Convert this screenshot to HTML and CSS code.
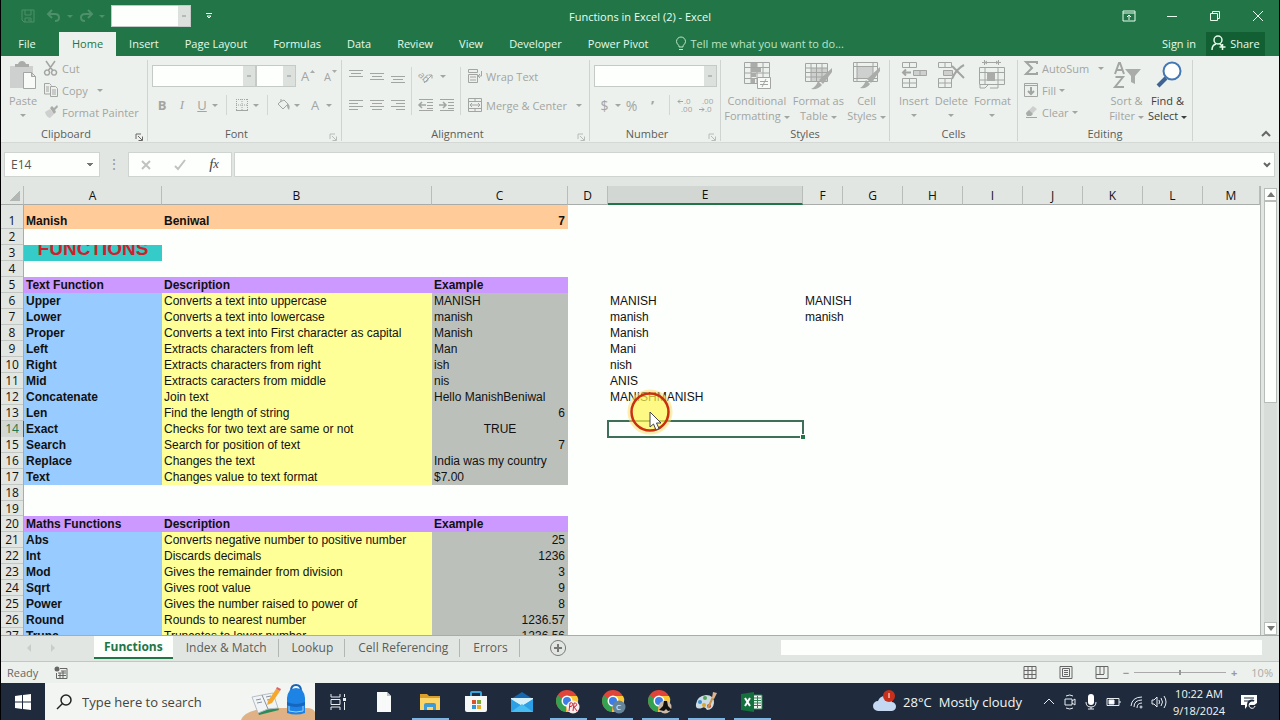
FILE: index.html
```html
<!DOCTYPE html>
<html lang="en">
<head>
    <meta charset="UTF-8">
    <meta name="viewport" content="width=device-width, initial-scale=1.0">
    <title>Functions in Excel (2) - Excel</title>
    <link rel="stylesheet" href="styles.css">
</head>
<body>

<!-- Title bar -->
<header class="titlebar">
    <div class="quick">
        <button aria-label="Save"><svg width="14" height="14" viewBox="0 0 14 14"><path d="M1 1h12v12H3L1 11zM4 1v5h6V1M4 13V9h6v4M8 10v2" /></svg></button>
        <button aria-label="Undo"><svg width="14" height="14" viewBox="0 0 14 14"><path d="M5 1L1 5l4 4M1 5h7q4 0 4 3.500T8 12" stroke-width="2"/></svg></button>
        <i class="caret"></i>
        <button aria-label="Redo"><svg width="14" height="14" viewBox="0 0 14 14"><path d="M9 1l4 4-4 4M13 5H6Q2 5 2 8.500T6 12" stroke-width="2"/></svg></button>
        <i class="caret"></i>
        <select class="combo quick-font" aria-label="Quick font"></select>
        <button class="customize" aria-label="Customize toolbar"><svg width="8" height="8" viewBox="0 0 8 8"><path d="M1 1.500h6M2 4h4L4 6z"/></svg></button>
    </div>
    <h1>Functions in Excel (2) - Excel</h1>
    <div class="window-buttons">
        <button aria-label="Ribbon options"><svg width="14" height="12" viewBox="0 0 14 12"><path d="M1 1h12v10H1zM1 3h12M7 10V5M5 7l2-2 2 2"/></svg></button>
        <button aria-label="Minimize"><svg width="12" height="12" viewBox="0 0 12 12"><path d="M1 6.500h10"/></svg></button>
        <button aria-label="Restore"><svg width="12" height="12" viewBox="0 0 12 12"><path d="M1.500 3.500h7v7h-7zM3.500 3.500v-2h7v7h-2"/></svg></button>
        <button aria-label="Close"><svg width="12" height="12" viewBox="0 0 12 12"><path d="M1 1l10 10M11 1L1 11"/></svg></button>
    </div>
</header>

<nav class="tabs">
    <button class="file">File</button>
    <button class="active">Home</button>
    <button>Insert</button>
    <button>Page Layout</button>
    <button>Formulas</button>
    <button>Data</button>
    <button>Review</button>
    <button>View</button>
    <button>Developer</button>
    <button>Power Pivot</button>
    <button class="tell-me"><svg width="12" height="15" viewBox="0 0 12 15"><path d="M4 11V9.500Q1.500 8 1.500 5.500a4.500 4.500 0 0 1 9 0Q10.500 8 8 9.500V11zM4 13.500h4"/></svg>Tell me what you want to do...</button>
    <button class="sign-in">Sign in</button>
    <button class="share"><svg width="15" height="16" viewBox="0 0 15 16"><path d="M1 15q0-5 4-6M7 1a4 4 0 1 1 0 8 4 4 0 0 1 0-8M9 9l2 2M11.500 9v6M8.500 12h6" stroke-width="1.500"/></svg>Share</button>
</nav>

<!-- Ribbon -->
<section class="ribbon">
    <div class="group clipboard">
        <div class="tools">
            <button class="big">
                <svg width="28" height="30" viewBox="0 0 28 30"><path class="solid pale" d="M1 6h23v22H1z"/><path class="solid" d="M6 7V4h3q1-3 4-3t4 3h3v3z"/><path class="paper" d="M14.500 12.500h8l4 4v12h-12zM22.500 12.500v4h4"/></svg>
                <span>Paste</span><i class="caret"></i>
            </button>
            <div class="stack">
                <button><svg width="16" height="16" viewBox="0 0 16 16"><path d="M3 1l7 10M12 1L5 11M4 10a2.500 2.500 0 1 0 .1 0M11 10a2.500 2.500 0 1 0 .1 0" stroke-width="1.500"/></svg>Cut</button>
                <button><svg width="16" height="16" viewBox="0 0 16 16"><path d="M7 12H1.500V1.500h5l2 2M3 5h3M3 7h3M3 9h3M7.500 4.500h5l2 2v8h-7zM9 8h4M9 10h4M9 12h4"/></svg>Copy<i class="caret spaced"></i></button>
                <button><svg width="16" height="16" viewBox="0 0 16 16"><path class="solid pale" d="M2 8l5-3 4 5-4 4q-4-1-5-6z"/><path class="solid" d="M7 4l2-2 2 2 3-3 1 2-3 3 1 2-2 2z"/></svg>Format Painter</button>
            </div>
        </div>
        <div class="label launch on">Clipboard<svg class="launcher" width="8" height="8" viewBox="0 0 8 8"><path d="M1 6V1h5M3 3l4 4M7.500 3.500v4h-4"/></svg></div>
    </div>

    <div class="group font">
        <div class="tools rows">
            <div class="row">
                <select class="combo name" aria-label="Font"></select><select class="combo size" aria-label="Font size"></select>
                <button class="grow" aria-label="Increase font size"><svg width="16" height="16" viewBox="0 0 16 16"><text x="1" y="13">A</text><path class="solid" d="M10 5l2.500-3L15 5z"/></svg></button>
                <button class="grow" aria-label="Decrease font size"><svg width="16" height="16" viewBox="0 0 16 16"><text class="small" x="2" y="13">A</text><path class="solid" d="M10 2h5l-2.500 3z"/></svg></button>
            </div>
            <div class="row">
                <button class="letter"><b>B</b></button>
                <button class="letter serif"><em>I</em></button>
                <button class="letter"><u>U</u></button>
                <i class="caret"></i><hr>
                <button aria-label="Borders"><svg width="14" height="14" viewBox="0 0 14 14"><path d="M1.500 1v12M12.500 1v12M1 1.500h12M7 1v12M1 7h12" stroke-dasharray="1 1"/><path d="M1 12.500h12"/></svg></button>
                <i class="caret"></i><hr>
                <button aria-label="Fill colour"><svg width="15" height="14" viewBox="0 0 15 14"><path d="M4 4l4-2 4 4-5 5-5-5 3-3V1"/><path class="solid" d="M11 5q4 2 2 7-2-2-2-4z"/></svg></button>
                <i class="caret"></i>
                <button class="letter colour">A</button>
                <i class="caret"></i>
            </div>
        </div>
        <div class="label launch">Font<svg class="launcher" width="8" height="8" viewBox="0 0 8 8"><path d="M1 6V1h5M3 3l4 4M7.500 3.500v4h-4"/></svg></div>
    </div>

    <div class="group alignment">
        <div class="tools">
            <div class="align-grid">
                <button aria-label="Top align"><svg width="14" height="14" viewBox="0 0 14 14"><path d="M0 1.500h14M2 4.500h10M0 7.500h14"/></svg></button>
                <button aria-label="Middle align"><svg width="14" height="14" viewBox="0 0 14 14"><path d="M0 4.500h14M2 7.500h10M0 10.500h14"/></svg></button>
                <button aria-label="Bottom align"><svg width="14" height="14" viewBox="0 0 14 14"><path d="M0 7.500h14M2 10.500h10M0 13.500h14"/></svg></button>
                <button aria-label="Align left"><svg width="14" height="14" viewBox="0 0 14 14"><path d="M0 2.500h14M0 5.500h9M0 8.500h14M0 11.500h9"/></svg></button>
                <button aria-label="Center"><svg width="14" height="14" viewBox="0 0 14 14"><path d="M0 2.500h14M2 5.500h10M0 8.500h14M2 11.500h10"/></svg></button>
                <button aria-label="Align right"><svg width="14" height="14" viewBox="0 0 14 14"><path d="M0 2.500h14M5 5.500h9M0 8.500h14M5 11.500h9"/></svg></button>
            </div>
            <hr>
            <div class="indent-grid">
                <button aria-label="Orientation"><svg width="16" height="16" viewBox="0 0 16 16"><text transform="rotate(45 1 6)" x="1" y="8">ab</text><path d="M6 15l8-8M10.500 7H14v3.500"/></svg></button>
                <i class="caret"></i>
                <button aria-label="Decrease indent"><svg width="16" height="14" viewBox="0 0 16 14"><path d="M1 1.500h14M9 4.500h6M9 7.500h6M9 10.500h6M1 12.500h14"/><path d="M1 7h7M4 4L1 7l3 3" stroke-width="1.500"/></svg></button>
                <button aria-label="Increase indent"><svg width="16" height="14" viewBox="0 0 16 14"><path d="M1 1.500h14M9 4.500h6M9 7.500h6M9 10.500h6M1 12.500h14"/><path d="M0 7h7M4 4l3 3-3 3" stroke-width="1.500"/></svg></button>
            </div>
            <hr>
            <div class="rows wrap">
                <button><svg width="16" height="16" viewBox="0 0 16 16"><path d="M1.500 1.500h9v3h-9zM1.500 6.500h9v8h-9zM3 9h6M3 12h6M14.500 3v5H11M13 6l-2 2 2 2"/></svg>Wrap Text</button>
                <button><svg width="16" height="16" viewBox="0 0 16 16"><path d="M1.500 1.500h13v13h-13zM1.500 4.500h13M1.500 11.500h13M8 1.500v3M8 11.500v3M3 8h10M5 6L3 8l2 2M11 6l2 2-2 2"/></svg>Merge &amp; Center<i class="caret spaced"></i></button>
            </div>
        </div>
        <div class="label launch">Alignment<svg class="launcher" width="8" height="8" viewBox="0 0 8 8"><path d="M1 6V1h5M3 3l4 4M7.500 3.500v4h-4"/></svg></div>
    </div>

    <div class="group number">
        <div class="tools rows">
            <div class="row"><select class="combo format" aria-label="Number format"></select></div>
            <div class="row">
                <button class="sign">$</button><i class="caret"></i>
                <button class="sign">%</button>
                <button class="sign"><b>’</b></button>
                <hr>
                <button aria-label="Increase decimal"><svg width="16" height="16" viewBox="0 0 16 16"><path d="M1 4.500h5M3 2.500l-2 2 2 2"/><text x="7" y="7">.0</text><text x="4" y="15">.00</text></svg></button>
                <button aria-label="Decrease decimal"><svg width="16" height="16" viewBox="0 0 16 16"><text x="4" y="7">.00</text><path d="M1 12.500h5M4 10.500l2 2-2 2"/><text x="7" y="15">.0</text></svg></button>
            </div>
        </div>
        <div class="label launch">Number<svg class="launcher" width="8" height="8" viewBox="0 0 8 8"><path d="M1 6V1h5M3 3l4 4M7.500 3.500v4h-4"/></svg></div>
    </div>

    <div class="group styles">
        <div class="tools">
            <button class="big">
                <svg width="28" height="30" viewBox="0 0 28 30"><path d="M1.500 2.500h25v21h-25zM8 2v22M14 2v22M20 2v22M1 7.500h26M1 13h26M1 18.500h26"/><path class="solid" d="M8 3h6v4H8zM8 8h10v4H8zM8 13h5v4H8zM8 18h4v5H8z"/><path class="paper" d="M14.500 17.500h13v11h-13z"/><path d="M17 21.500h8M17 24.500h8M23 19l-4 8"/></svg>
                <span>Conditional<br>Formatting <i class="caret"></i></span>
            </button>
            <button class="big">
                <svg width="28" height="30" viewBox="0 0 28 30"><path class="solid pale" d="M7 8h16v13H7z"/><path d="M1.500 3.500h22v18h-22zM7 3v19M12.500 3v19M18 3v19M1 8h23M1 12.500h23M1 17h23"/><path class="solid" d="M28 8v4l-9 12-4-4zM14 21l4 4q-4 5-11 4 5-2 7-8z"/></svg>
                <span>Format as<br>Table <i class="caret"></i></span>
            </button>
            <button class="big">
                <svg width="28" height="30" viewBox="0 0 28 30"><path class="solid pale" d="M5 7h16v11H5z"/><path d="M1.500 2.500h24v19h-24zM5 2v20M21 2v20M1 6.500h25M1 18.500h25"/><path class="solid" d="M28 7v4l-9 12-4-4zM14 20l4 4q-3 5-10 4 4-2 6-8z"/></svg>
                <span>Cell<br>Styles <i class="caret"></i></span>
            </button>
        </div>
        <div class="label">Styles</div>
    </div>

    <div class="group cells">
        <div class="tools">
            <button class="big">
                <svg width="28" height="30" viewBox="0 0 28 30"><path d="M2.500 2.500h14v5h-14zM9.500 2v6M2.500 18.500h14v9h-14zM9.500 18v10M2 23h15"/><path class="solid pale" d="M13 10h14v5H13z"/><path d="M13.500 10.500h13v5h-13zM20 10v6"/><path d="M3 12.500h8M6 9.500l-3 3 3 3" stroke-width="2"/></svg>
                <span>Insert</span><i class="caret"></i>
            </button>
            <button class="big">
                <svg width="28" height="30" viewBox="0 0 28 30"><path d="M1.500 2.500h13v5h-13zM8 2v6M1.500 18.500h13v9h-13zM8 18v10M1 23h14"/><path class="solid pale" d="M6 10h9v5H6z"/><path d="M6.500 10.500h9v5h-9z"/><path d="M15 6l12 12M27 5q-8 4-12 14" stroke-width="2"/></svg>
                <span>Delete</span><i class="caret"></i>
            </button>
            <button class="big">
                <svg width="28" height="30" viewBox="0 0 28 30"><path d="M4 2.500h19M6.500 0v5M20.500 0v5M9 1L7 2.500 9 4M18 1l2 1.500L18 4M1.500 7.500h25v17h-25zM7 7v18M20 7v18M1 12.500h26M1 20h26M2 25v3h5l3-3M12 28h8v-3"/><path class="solid" d="M9 12h8v9H9z"/></svg>
                <span>Format</span><i class="caret"></i>
            </button>
        </div>
        <div class="label">Cells</div>
    </div>

    <div class="group editing">
        <div class="tools">
            <div class="stack">
                <button><svg width="16" height="16" viewBox="0 0 16 16"><path d="M14 4V2H3l6 6-6 6h11v-2" stroke-width="2"/></svg>AutoSum<i class="caret spaced"></i></button>
                <button><svg width="16" height="16" viewBox="0 0 16 16"><path d="M1.500 1.500h13v13h-13zM1 3.500h14"/><path d="M8 5v7M5 9l3 3 3-3" stroke-width="2"/></svg>Fill<i class="caret"></i></button>
                <button><svg width="16" height="16" viewBox="0 0 16 16"><path class="solid pale" d="M3 9l7-7 4 3-7 7H4z"/><path class="solid" d="M3 9l3-3 4 4-2 2H4z"/><path d="M3 13.500h11"/></svg>Clear<i class="caret"></i></button>
            </div>
            <button class="big">
                <svg width="28" height="30" viewBox="0 0 28 30"><path d="M2 14L6 3h1l4 11M3 10h7M2.500 17H10L2 27h9" stroke-width="2"/><path class="solid" d="M12 9h16l-6 7v8l-4-2v-6z"/></svg>
                <span>Sort &amp;<br>Filter <i class="caret"></i></span>
            </button>
            <button class="big enabled">
                <svg width="28" height="30" viewBox="0 0 28 30"><circle cx="18" cy="11" r="8.500" fill="#fcfffc" stroke="#4478b4" stroke-width="2"/><path d="M12 18l-8 8" stroke="#3f6494" stroke-width="4"/></svg>
                <span>Find &amp;<br>Select <i class="caret"></i></span>
            </button>
        </div>
        <div class="label">Editing</div>
    </div>
    <button class="collapse" aria-label="Collapse ribbon"><svg width="10" height="8" viewBox="0 0 10 8"><path d="M1 6l4-4 4 4" stroke-width="2"/></svg></button>
</section>

<!-- Formula bar -->
<section class="formula">
    <select class="name-box" aria-label="Name box"><option>E14</option></select>
    <span class="grip">⋮</span>
    <div class="formula-buttons">
        <button aria-label="Cancel"><svg width="12" height="12" viewBox="0 0 12 12"><path d="M2 2l8 8M10 2l-8 8" stroke-width="2"/></svg></button>
        <button aria-label="Enter"><svg width="12" height="12" viewBox="0 0 12 12"><path d="M1 7l3 3 7-9" stroke-width="2"/></svg></button>
        <button class="fx">f<small>x</small></button>
    </div>
    <input class="formula-input" type="text" aria-label="Formula">
    <button class="expand" aria-label="Expand formula bar"><svg width="8" height="8" viewBox="0 0 8 8"><path d="M1 2l3 3 3-3" stroke-width="2"/></svg></button>
</section>

<!-- Worksheet -->
<main class="sheet">
    <div class="grid">
        <table>
            <colgroup>
                <col class="c-head"><col class="c-a"><col class="c-b"><col class="c-c"><col class="c-d"><col class="c-e"><col class="c-f">
                <col class="c-std"><col class="c-std"><col class="c-std"><col class="c-std"><col class="c-std"><col class="c-std"><col>
            </colgroup>
            <thead>
                <tr><th class="corner"></th><th>A</th><th>B</th><th>C</th><th>D</th><th class="current">E</th><th>F</th><th>G</th><th>H</th><th>I</th><th>J</th><th>K</th><th>L</th><th>M</th></tr>
            </thead>
            <tbody>
                <tr class="names"><th>1</th><td>Manish</td><td>Beniwal</td><td class="num">7</td></tr>
                <tr><th>2</th></tr>
                <tr><th>3</th><td class="banner"><div>FUNCTIONS</div></td></tr>
                <tr><th>4</th></tr>
                <tr class="heading"><th>5</th><td>Text Function</td><td>Description</td><td>Example</td></tr>
                <tr class="data"><th>6</th><td>Upper</td><td>Converts a text into uppercase</td><td>MANISH</td><td></td><td>MANISH</td><td>MANISH</td></tr>
                <tr class="data"><th>7</th><td>Lower</td><td>Converts a text into lowercase</td><td>manish</td><td></td><td>manish</td><td>manish</td></tr>
                <tr class="data"><th>8</th><td>Proper</td><td>Converts a text into First character as capital</td><td>Manish</td><td></td><td>Manish</td></tr>
                <tr class="data"><th>9</th><td>Left</td><td>Extracts characters from left</td><td>Man</td><td></td><td>Mani</td></tr>
                <tr class="data"><th>10</th><td>Right</td><td>Extracts characters from right</td><td>ish</td><td></td><td>nish</td></tr>
                <tr class="data"><th>11</th><td>Mid</td><td>Extracts caracters from middle</td><td>nis</td><td></td><td>ANIS</td></tr>
                <tr class="data"><th>12</th><td>Concatenate</td><td>Join text</td><td>Hello ManishBeniwal</td><td></td><td>MANISHMANISH</td></tr>
                <tr class="data"><th>13</th><td>Len</td><td>Find the length of string</td><td class="num">6</td></tr>
                <tr class="data"><th class="current">14</th><td>Exact</td><td>Checks for two text are same or not</td><td class="mid">TRUE</td><td></td>
                    <td class="selected"><span class="handle"></span><svg class="pointer" width="48" height="48" viewBox="0 0 48 48"><circle cx="24" cy="24" r="21" fill="none" stroke="#ffdf6b" stroke-width="3" opacity=".55"/><circle cx="24" cy="24" r="18.500" fill="#fff651" fill-opacity=".7" stroke="#c9300f" stroke-width="2.500"/><path d="M24 24v15l3.500-3 2.500 6 3-1.500-2.500-5.500h4.500z" fill="#fff" stroke="#444" stroke-width="1"/></svg></td></tr>
                <tr class="data"><th>15</th><td>Search</td><td>Search for position of text</td><td class="num">7</td></tr>
                <tr class="data"><th>16</th><td>Replace</td><td>Changes the text</td><td>India was my country</td></tr>
                <tr class="data"><th>17</th><td>Text</td><td>Changes value to text format</td><td>$7.00</td></tr>
                <tr><th>18</th></tr>
                <tr class="gap"><th>19</th></tr>
                <tr class="heading"><th>20</th><td>Maths Functions</td><td>Description</td><td>Example</td></tr>
                <tr class="data"><th>21</th><td>Abs</td><td>Converts negative number to positive number</td><td class="num">25</td></tr>
                <tr class="data"><th>22</th><td>Int</td><td>Discards decimals</td><td class="num">1236</td></tr>
                <tr class="data"><th>23</th><td>Mod</td><td>Gives the remainder from division</td><td class="num">3</td></tr>
                <tr class="data"><th>24</th><td>Sqrt</td><td>Gives root value</td><td class="num">9</td></tr>
                <tr class="data"><th>25</th><td>Power</td><td>Gives the number raised to power of</td><td class="num">8</td></tr>
                <tr class="data"><th>26</th><td>Round</td><td>Rounds to nearest number</td><td class="num">1236.57</td></tr>
                <tr class="data"><th>27</th><td>Trunc</td><td>Truncates to lower number</td><td class="num">1236.56</td></tr>
            </tbody>
        </table>
    </div>
    <div class="scroll">
        <button aria-label="Scroll up"><svg width="8" height="5" viewBox="0 0 8 5"><path d="M0 5l4-5 4 5z"/></svg></button>
        <div class="track"><div class="thumb"></div></div>
        <button aria-label="Scroll down"><svg width="8" height="5" viewBox="0 0 8 5"><path d="M0 0l4 5 4-5z"/></svg></button>
    </div>
</main>

<nav class="sheet-tabs">
    <div class="arrows">
        <svg width="5" height="8" viewBox="0 0 5 8"><path d="M5 0L1 4l4 4z"/></svg>
        <svg width="5" height="8" viewBox="0 0 5 8"><path d="M0 0l4 4-4 4z"/></svg>
    </div>
    <button class="active">Functions</button>
    <button>Index &amp; Match</button>
    <button>Lookup</button>
    <button>Cell Referencing</button>
    <button>Errors</button>
    <button class="add" aria-label="New sheet"><svg width="16" height="16" viewBox="0 0 16 16"><path d="M8 .5a7.500 7.500 0 1 0 .1 0z"/><path d="M8 4v8M4 8h8" stroke-width="2"/></svg></button>
    <div class="h-scroll"></div>
</nav>

<footer class="status">
    <span>Ready</span>
    <svg class="macro" width="14" height="14" viewBox="0 0 14 14"><path d="M6 2.500h7v10H2.500V7M4 7h8M4 9.500h8M7 5h5M6 7v5M9 5v7"/><circle cx="3" cy="3" r="2.500" fill="#666" stroke="none"/></svg>
    <div class="views">
        <button aria-label="Normal"><svg width="14" height="13" viewBox="0 0 14 13"><path d="M1 .5h12v12H1zM5 0v13M9 0v13M1 4.500h12M1 8.500h12"/></svg></button>
        <button aria-label="Page layout"><svg width="14" height="13" viewBox="0 0 14 13"><path d="M1 .5h12v12H1zM3.500 2.500h7v8h-7zM5 4.500h4M5 6.500h4M5 8.500h4"/></svg></button>
        <button aria-label="Page break"><svg width="14" height="13" viewBox="0 0 14 13"><path d="M1 .5h12v12H1zM5 0v8M9 0v8M1 8.500h8"/></svg></button>
    </div>
    <div class="zoom"><b>−</b><input type="range" min="0" max="100" value="50" aria-label="Zoom"><b>+</b></div>
    <span class="percent">10%</span>
</footer>

<!-- Windows taskbar -->
<footer class="taskbar">
    <button class="start" aria-label="Start"><svg width="16" height="16" viewBox="0 0 16 16"><path d="M0 2l7-1v6.500H0zM8 1l8-1v7.500H8zM0 8.500h7V15l-7-1zM8 8.500h8V16l-8-1z" fill="#fff"/></svg></button>
    <label class="search">
        <svg width="16" height="16" viewBox="0 0 16 16"><circle cx="10" cy="6" r="5" fill="none" stroke="#222" stroke-width="1.500"/><path d="M6.500 9.500L1 15" stroke="#222" stroke-width="1.500"/></svg>
        <input type="text" placeholder="Type here to search" aria-label="Search">
        <svg class="doodle" width="74" height="36" viewBox="0 0 74 36">
            <path d="M0 36q4-12 36-12h30q6 0 8 4v8z" fill="#dfb184"/>
            <path d="M12 15l20-3 6 14-20 5z" fill="#2c8b57"/>
            <path d="M11 13l10-2 11-2 5 15-10 1-10 4z" fill="#f1f4f7" stroke="#b8bec6"/>
            <path d="M21 11l6 14M15 16l5-1M16 19l5-1M25 13l5-1M26 16l5-1" stroke="#88919a"/>
            <path d="M27 17L35 5l4 2-8 12-5 2z" fill="#f5a82c"/><path d="M35 5l1-2 4 2-1 2z" fill="#d9646c"/>
            <path d="M50 7q0-6 5-6t5 6" fill="none" stroke="#1863b5" stroke-width="2"/>
            <path d="M46 14q1-10 9-10t9 10v15q-9 3-18 0z" fill="#1d83e4"/>
            <path d="M46 18q9 4 18 0v3q-9 4-18 0z" fill="#1566bf"/><path d="M48 22v5q7 2 14 0v-5" fill="none" stroke="#9dd1f7"/>
        </svg>
    </label>
    <div class="apps">
        <button aria-label="Task view"><svg width="16" height="16" viewBox="0 0 16 16"><path d="M1 0v3h9V0M1 5.500h9v5H1zM1 16v-3h9v3M14.500 0v3M14.500 8v8" fill="none" stroke="#e8edf2"/><path d="M13 4h3v3h-3z" fill="#e8edf2"/></svg></button>
        <button aria-label="Document"><svg width="16" height="20" viewBox="0 0 16 20"><path d="M1 0h10l4 4v16H1z" fill="#f7faf8"/><path d="M11 0v4h4z" fill="#b9c1c4"/></svg></button>
        <button class="running" aria-label="File Explorer"><svg width="22" height="20" viewBox="0 0 22 20"><path d="M1 2h7l2 2h11v4H1z" fill="#d9a12b"/><path d="M1 6h20v12H1z" fill="#fbd568"/><path d="M5 18v-5q0-2 2-2h8q2 0 2 2v5h-3v-3H8v3z" fill="#3f9bd5"/></svg></button>
        <button aria-label="Store"><svg width="22" height="22" viewBox="0 0 22 22"><path d="M6 5V2q0-1 1-1h8q1 0 1 1v3" fill="none" stroke="#38a4dc" stroke-width="2"/><path d="M0 5h22v14q0 2-2 2H2q-2 0-2-2z" fill="#f6f8f8"/><path d="M7 9h4v4H7z" fill="#d9532c"/><path d="M12 9h4v4h-4z" fill="#7bab35"/><path d="M7 14h4v4H7z" fill="#3497d3"/><path d="M12 14h4v4h-4z" fill="#e9ac25"/></svg></button>
        <button aria-label="Mail"><svg width="22" height="20" viewBox="0 0 22 20"><path d="M0 7L11 0l11 7v13H0z" fill="#1567b0"/><path d="M0 6h22v2l-11 6L0 8z" fill="#d6f0fa"/><path d="M0 7l11 7 11-7v13H0z" fill="#2ca0e6"/><path d="M0 20l11-8 11 8z" fill="#48bdf1"/></svg></button>
        <button class="running" aria-label="Chrome profile 1"><svg width="26" height="24" viewBox="0 0 26 24"><circle cx="12" cy="11" r="11" fill="#e1453a"/><path d="M12 11L2.500 5.500A11 11 0 0 0 11 22z" fill="#34a151"/><path d="M12 11h11a11 11 0 0 1-12 11z" fill="#fbc935"/><path d="M12 6h10q2 3 1 6H12z" fill="#fbc935"/><circle cx="12" cy="11" r="5.500" fill="#fff"/><circle cx="12" cy="11" r="4" fill="#3e7de6"/><circle cx="18" cy="17" r="6.500" fill="#f5eeee"/><path d="M14 21l1-8q4-1 2 3l-3 1M18 21l1-8q4 0 2 3l-2 1 3 4" fill="none" stroke="#cf2735"/></svg></button>
        <button class="running" aria-label="Chrome profile 2"><svg width="26" height="24" viewBox="0 0 26 24"><circle cx="12" cy="11" r="11" fill="#e1453a"/><path d="M12 11L2.500 5.500A11 11 0 0 0 11 22z" fill="#34a151"/><path d="M12 11h11a11 11 0 0 1-12 11z" fill="#fbc935"/><path d="M12 6h10q2 3 1 6H12z" fill="#fbc935"/><circle cx="12" cy="11" r="5.500" fill="#fff"/><circle cx="12" cy="11" r="4" fill="#3e7de6"/><circle cx="18" cy="17" r="6.500" fill="#66859b"/><text x="15" y="20">C</text></svg></button>
        <button class="running" aria-label="Chrome profile 3"><svg width="26" height="24" viewBox="0 0 26 24"><circle cx="12" cy="11" r="11" fill="#e1453a"/><path d="M12 11L2.500 5.500A11 11 0 0 0 11 22z" fill="#34a151"/><path d="M12 11h11a11 11 0 0 1-12 11z" fill="#fbc935"/><path d="M12 6h10q2 3 1 6H12z" fill="#fbc935"/><circle cx="12" cy="11" r="5.500" fill="#fff"/><circle cx="12" cy="11" r="4" fill="#3e7de6"/><circle cx="18" cy="17" r="6.500" fill="#c9b9a5"/><path d="M12 20l4-4 1-5h3l1 5 4 4-4 1-2-2-2 2z" fill="#111"/></svg></button>
        <button class="running" aria-label="Paint"><svg width="24" height="22" viewBox="0 0 24 22"><path d="M2 13q1-8 10-9 8 0 8 8-1 7-7 7-2-4-5-2-7 2-6-4z" fill="#cddbe3"/><circle cx="6" cy="11" r="2" fill="#3a91cf"/><circle cx="11" cy="7" r="2" fill="#53a45a"/><circle cx="10" cy="14" r="2" fill="#d7a72e"/><circle cx="15" cy="15" r="2" fill="#bd4a3c"/><path d="M14 17l5-11" stroke="#cc9247" stroke-width="2"/><path d="M18 7l1-6 4 1-3 6z" fill="#dfb38f"/></svg></button>
        <button class="running" aria-label="Excel"><svg width="22" height="20" viewBox="0 0 22 20"><path d="M11 3h10v14H11z" fill="#f4f8f5" stroke="#2b8250"/><path d="M13 6h7M13 8.500h7M13 11h7M13 13.500h7M16.500 4v12" stroke="#2b8250"/><path d="M0 2l13-2v20L0 18z" fill="#14703c"/><path d="M4 6l5 8M9 6l-5 8" stroke="#fff" stroke-width="2"/></svg></button>
    </div>
    <div class="weather">
        <svg width="24" height="24" viewBox="0 0 24 24"><path d="M6 21a5 5 0 0 1 0-10q2-5 7-5 6 0 7 6a4.500 4.500 0 0 1-1 9z" fill="#c5d8f1"/><circle cx="17" cy="6" r="6" fill="#c9301c"/><path d="M17 3v5" stroke="#fff"/></svg>
        <span>28°C</span><span>Mostly cloudy</span>
    </div>
    <div class="tray">
        <svg width="12" height="16" viewBox="0 0 12 16"><path d="M1 10l5-5 5 5"/></svg>
        <svg width="12" height="16" viewBox="0 0 12 16"><path d="M1 5h7v6H1zM8 7l3-2v6l-3-2M2 2q4-2 7 0M2 14q4 2 7 0"/></svg>
        <svg width="12" height="16" viewBox="0 0 12 16"><rect x="3" y="0" width="6" height="11" rx="3" fill="#fff" stroke="none"/><path d="M1 8q0 5 5 5t5-5M6 13v2M3 15h6"/></svg>
        <svg width="15" height="16" viewBox="0 0 15 16"><path d="M1 4.500h12v7H1zM14 7v2"/><path d="M3 6h5v4H3z" fill="#fff"/></svg>
        <svg width="12" height="16" viewBox="0 0 12 16"><path d="M1 12Q2 3 12 3M4 13q0-7 8-7M7 14q0-5 5-5"/><circle cx="11" cy="13" r="1"/></svg>
        <svg width="16" height="16" viewBox="0 0 16 16"><path d="M1 6h2l3-3v10l-3-3H1zM8 6q1 2 0 4M10 4q3 4 0 8M13 2q4 6 0 12"/></svg>
    </div>
    <div class="clock">10:22 AM<br>9/18/2024</div>
    <button class="notes" aria-label="Notifications"><svg width="16" height="16" viewBox="0 0 16 16"><path d="M0 1h16v10H7l-3 4v-4H0z" fill="#fff"/><path d="M3 4h10M3 7h7" stroke="#1f2b3c"/><path d="M13 7a4 4 0 1 0 2 4l-4 3" fill="none" stroke="#1f2b3c" stroke-width="2"/><path d="M13 9a3 3 0 1 0 1 3" fill="none" stroke="#fff"/></svg></button>
</footer>

</body>
</html>
```
FILE: styles.css
```css
* {
    box-sizing: border-box;
}
body {
    margin: 0;
    height: 100vh;
    display: flex;
    flex-direction: column;
    overflow: hidden;
    border-left: 1px solid #000;
    border-right: 1px solid #000;
    background: #e2e6e2;
    color: #444;
    font-family: "Open Sans", "Noto Sans", sans-serif;
    font-size: 11px;
}
button {
    display: flex;
    align-items: center;
    justify-content: center;
    padding: 0;
    border: none;
    background: none;
    color: inherit;
    font: inherit;
    white-space: nowrap;
}
svg {
    flex: none;
    fill: none;
    stroke: currentColor;
    overflow: visible;
}
hr {
    width: 1px;
    height: 20px;
    margin: 0;
    border: none;
    background: #d3d7d3;
}
.caret {
    display: inline-block;
    flex: none;
    border: 3px solid transparent;
    border-top-color: currentColor;
    border-bottom: none;
    vertical-align: middle;
}

/* title bar */
.titlebar {
    display: grid;
    grid-template-columns: 1fr auto 1fr;
    align-items: center;
    height: 32px;
    flex: none;
    background: #227547;
    color: #e9fff0;
}
.titlebar h1 {
    margin: 0;
    font-size: 11px;
    font-weight: normal;
}
.quick {
    display: flex;
    align-items: center;
    gap: 6px;
    padding-left: 20px;
    height: 28px;
    color: #4d9069;
}
.quick button:first-child {
    margin-right: 6px;
}
.quick .customize {
    margin-left: 8px;
    color: #e9fff0;
}
.window-buttons {
    display: flex;
    justify-content: flex-end;
    height: 28px;
}
.window-buttons button {
    width: 43px;
}

/* combo boxes */
.combo {
    appearance: none;
    height: 22px;
    padding: 0;
    border: 1px solid #c6cac6;
    border-radius: 0;
    background:
        linear-gradient(#b6bab6, #b6bab6) right 4px center / 4px 2px no-repeat,
        linear-gradient(#dde1dd, #dde1dd) right center / 12px 100% no-repeat,
        #fcfffb;
}
.quick-font {
    width: 80px;
}
.name {
    width: 104px;
}
.size {
    width: 40px;
}
.format {
    width: 123px;
}

/* ribbon tabs */
.tabs {
    display: flex;
    height: 24px;
    flex: none;
    background: #227547;
    color: #e4fbea;
}
.tabs button {
    padding: 0 13px 2px;
}
.tabs .file {
    width: 52px;
    margin-right: 6px;
}
.tabs .active {
    background: #edf1ed;
    color: #227547;
}
.tabs .tell-me {
    gap: 4px;
    color: #b9e6c7;
}
.tabs .sign-in {
    margin-left: auto;
    padding: 0 10px 2px;
}
.tabs .share {
    gap: 4px;
    width: 59px;
    margin-right: 14px;
    padding: 0 0 2px;
    background: #125f33;
}

/* ribbon */
.ribbon {
    display: flex;
    height: 87px;
    flex: none;
    padding-top: 4px;
    border-bottom: 1px solid #d5d9d5;
    background: #edf1ed;
    color: #a2a5a2;
}
.group {
    display: flex;
    flex-direction: column;
    flex: none;
    height: 81px;
    border-right: 1px solid #d0d4d0;
}
.tools {
    display: flex;
    flex: 1;
}
.label {
    position: relative;
    height: 14px;
    line-height: 14px;
    color: #5a5d5a;
    text-align: center;
}
.launch {
    padding-right: 16px;
}
.launcher {
    position: absolute;
    right: 4px;
    bottom: 0;
    color: #b8bbb8;
}
.on .launcher {
    color: #666;
}
.solid {
    fill: #a9aca9;
    stroke: none;
}
.pale {
    fill: #cdd0cf;
}
.paper {
    fill: #f8faf8;
}
.big {
    flex-direction: column;
    justify-content: flex-start;
    line-height: 15px;
}
.big svg {
    margin-bottom: 3px;
}
.big > .caret {
    margin-top: 6px;
}
.enabled {
    color: #3c3f3c;
}
.stack {
    display: flex;
    flex-direction: column;
    gap: 6px;
}
.stack button {
    height: 16px;
    gap: 3px;
    justify-content: flex-start;
}
.spaced {
    margin-left: 6px;
}
.clipboard {
    width: 147px;
}
.clipboard .tools {
    gap: 6px;
    padding-left: 8px;
}
.rows {
    display: flex;
    flex-direction: column;
    gap: 7px;
    padding-top: 5px;
}
.row {
    display: flex;
    align-items: center;
    height: 22px;
}
.ribbon text {
    fill: currentColor;
    stroke: none;
}
.font {
    width: 194px;
}
.font .rows,
.number .rows {
    padding-left: 4px;
}
.grow {
    width: 20px;
    margin-left: 2px;
}
.grow text {
    font-size: 13px;
}
.grow .small {
    font-size: 11px;
}
.font .letter {
    width: 20px;
    font-size: 13px;
}
.font .letter.colour {
    margin-left: 4px;
    width: 22px;
}
.font .row button:not(.letter):not(.grow) {
    width: 22px;
}
.font .row hr {
    margin: 0 4px 0 8px;
}
.serif {
    font-family: "Liberation Serif", serif;
}
.alignment {
    width: 248px;
}
.alignment hr {
    height: 48px;
    margin-top: 7px;
}
.align-grid,
.indent-grid {
    display: grid;
    grid-template-columns: repeat(3, 21px);
    grid-auto-rows: 22px;
    row-gap: 7px;
    align-items: center;
    align-content: start;
    padding: 5px 3px 0;
}
.indent-grid {
    grid-template-columns: 21px 21px;
}
.indent-grid .caret {
    justify-self: start;
    margin-left: 4px;
}
.indent-grid text {
    font-size: 10px;
}
.wrap {
    padding-left: 6px;
}
.wrap button {
    height: 22px;
    gap: 3px;
    justify-content: flex-start;
}
.number {
    width: 131px;
}
.number .row button {
    width: 21px;
}
.number .row .sign {
    font-size: 14px;
}
.number .row hr {
    margin: 0 4px 0 6px;
}
.number text {
    font-size: 8px;
}
.styles {
    width: 169px;
}
.styles .tools {
    justify-content: space-evenly;
}
.cells {
    width: 128px;
}
.cells .tools {
    justify-content: space-evenly;
    padding-left: 3px;
}
.editing {
    width: 175px;
}
.editing .tools {
    padding-left: 5px;
}
.editing .stack {
    width: 83px;
}
.editing .big {
    width: 41px;
}
.collapse {
    align-self: flex-end;
    margin-left: auto;
    padding: 0 8px 4px 0;
    color: #666;
}

/* formula bar */
.formula {
    display: flex;
    flex: none;
    height: 25px;
    margin: 9px 4px 9px 3px;
}
.name-box {
    appearance: none;
    width: 96px;
    padding: 0 6px;
    border: 1px solid #d0d4d0;
    border-radius: 0;
    background:
        linear-gradient(to bottom right, #777 50%, transparent 50%) right 5px center / 4px 4px no-repeat,
        linear-gradient(to bottom left, #777 50%, transparent 50%) right 9px center / 4px 4px no-repeat,
        #fcfffb;
    color: #555;
    font: inherit;
    font-size: 12px;
}
.grip {
    width: 28px;
    line-height: 24px;
    text-align: center;
    font-size: 14px;
    color: #999;
}
.formula-buttons {
    display: flex;
    width: 104px;
    border: 1px solid #d0d4d0;
    background: #fcfffb;
    color: #c0c3c0;
}
.formula-buttons button {
    flex: 1;
}
.formula-buttons .fx {
    color: #444;
    font-family: "Liberation Serif", serif;
    font-style: italic;
    font-size: 15px;
}
.formula-input {
    flex: 1;
    margin-left: 2px;
    padding: 0 4px;
    border: 1px solid #d0d4d0;
    border-right: none;
    background: #fcfffb;
}
.expand {
    width: 16px;
    border: 1px solid #d0d4d0;
    border-left: none;
    background: #fcfffb;
    color: #666;
}

/* worksheet */
.sheet {
    display: flex;
    flex: 1;
    min-height: 0;
    border-bottom: 1px solid #a9ada9;
}
.grid {
    flex: 1;
    overflow: hidden;
    border-right: 1px solid #b3b7b3;
    background: linear-gradient(#e2e6e2 19px, #fcfffb 19px);
}
table {
    width: 100%;
    table-layout: fixed;
    border-spacing: 0;
    color: #111;
    font-family: "Liberation Sans", Arial, sans-serif;
    font-size: 12px;
    line-height: 16px;
}
.c-head { width: 23px; }
.c-a { width: 138px; }
.c-b { width: 270px; }
.c-c { width: 136px; }
.c-d { width: 40px; }
.c-e { width: 195px; }
.c-f { width: 40px; }
.c-std { width: 60px; }
th {
    padding: 0;
    font-family: "Open Sans", "Noto Sans", sans-serif;
    font-size: 12px;
    font-weight: normal;
}
thead th {
    height: 19px;
    padding-top: 1px;
    border-right: 1px solid #b9bdb9;
    border-bottom: 1px solid #a9ada9;
}
.corner {
    background: linear-gradient(135deg, transparent 50%, #b3b7b3 50%) right 3px bottom 3px / 11px 11px no-repeat;
}
thead .current {
    padding-top: 0;
    border-bottom: 2px solid #227547;
    background: #d3d7d3;
}
tbody th {
    height: 16px;
    border-right: 1px solid #a9ada9;
    background: linear-gradient(#c3c7c3, #c3c7c3) bottom / 100% 1px no-repeat #e2e6e2;
}
tbody th.current {
    background: #d3d7d3;
    border-right-color: #227547;
    color: #227547;
}
td {
    height: 16px;
    padding: 0 2px;
    white-space: nowrap;
}
.num {
    padding-right: 3px;
    text-align: right;
}
.mid {
    text-align: center;
}
.names th,
.names td {
    height: 24px;
    padding-top: 7px;
}
.names td {
    background: #ffcb98;
    font-weight: bold;
}
.gap th {
    height: 15px;
    line-height: 15px;
}
.heading td {
    background: #cb99ff;
    font-weight: bold;
}
.banner {
    padding: 0;
    background: #35cbc8;
}
.banner div {
    display: flex;
    align-items: flex-end;
    justify-content: center;
    height: 16px;
    overflow: hidden;
    color: #d01f2c;
    font-size: 19px;
    font-weight: bold;
    line-height: 24px;
}
.data td:nth-child(2) {
    background: #98cbff;
    font-weight: bold;
}
.data td:nth-child(3) {
    background: #ffff98;
}
.data td:nth-child(4) {
    background: #bcc0bb;
}
.selected {
    position: relative;
    outline: 2px solid #3f6f58;
    outline-offset: -1px;
}
.handle {
    position: absolute;
    right: -3px;
    bottom: -3px;
    width: 6px;
    height: 6px;
    border: 1px solid #fcfffb;
    background: #227547;
}
.pointer {
    position: absolute;
    left: 18px;
    bottom: 1px;
}

/* vertical scrollbar */
.scroll {
    display: flex;
    flex-direction: column;
    width: 18px;
    padding: 2px 2px 0 3px;
}
.scroll button {
    height: 13px;
    border: 1px solid #b9bdb9;
    background: #fcfffb;
}
.scroll svg {
    fill: #777;
    stroke: none;
}
.track {
    flex: 1;
    background: #d9ddd9;
}
.thumb {
    height: 48%;
    border: 1px solid #b9bdb9;
    background: #fcfffb;
}

/* sheet tabs */
.sheet-tabs {
    display: flex;
    flex: none;
    height: 26px;
    padding-bottom: 2px;
    border-bottom: 1px solid #c3c7c3;
    color: #5a5d5a;
    font-size: 12px;
}
.arrows {
    display: flex;
    align-items: center;
    justify-content: center;
    gap: 20px;
    width: 93px;
    padding-right: 14px;
}
.arrows svg {
    fill: #c9cdc9;
    stroke: none;
}
.sheet-tabs button {
    padding: 0 12px 0 13px;
    background: linear-gradient(#b3b7b3, #b3b7b3) right center / 1px 18px no-repeat;
}
.sheet-tabs .active {
    padding: 0 10px;
    border-bottom: 2px solid #227547;
    background: #fcfffb;
    color: #227547;
    font-weight: bold;
}
.sheet-tabs .add {
    padding: 0 30px;
    background: none;
    color: #777;
}
.h-scroll {
    width: 481px;
    height: 15px;
    margin: 4px 17px 0 auto;
    background: #fcfffb;
}

/* status bar */
.status {
    display: flex;
    align-items: center;
    flex: none;
    height: 21px;
    padding: 0 6px;
    background: #edf1ed;
    color: #666;
}
.macro {
    margin-left: 16px;
}
.views {
    display: flex;
    gap: 22px;
    margin-left: auto;
}
.zoom {
    display: flex;
    align-items: center;
    gap: 5px;
    margin-left: 14px;
    color: #999;
}
.zoom input {
    appearance: none;
    width: 92px;
    height: 1px;
    margin: 0;
    background: #aaa;
}
.zoom input::-webkit-slider-thumb {
    appearance: none;
    width: 2px;
    height: 5px;
    background: #999;
}
.percent {
    margin-left: 14px;
    color: #aaa;
}

/* taskbar */
.taskbar {
    display: flex;
    flex: none;
    height: 37px;
    background: #1f2b3c;
    color: #f2f6f4;
    font-size: 13px;
}
.taskbar svg {
    stroke: none;
}
.start {
    width: 44px;
}
.search {
    display: flex;
    align-items: center;
    width: 270px;
    padding-left: 11px;
    background: #f2f5f2;
}
.search input {
    flex: 1;
    min-width: 0;
    padding: 0 10px;
    border: none;
    background: none;
    font: inherit;
}
.search input::placeholder {
    color: #444;
}
.doodle {
    align-self: flex-end;
}
.apps {
    display: flex;
}
.apps button {
    width: 46px;
}
.apps .running {
    background: linear-gradient(#78b6e6, #78b6e6) center bottom / 37px 2px no-repeat;
}
.apps text {
    font-size: 8px;
    fill: #fff;
}
.weather {
    display: flex;
    align-items: center;
    gap: 7px;
    margin-left: auto;
}
.tray {
    display: flex;
    align-items: center;
    gap: 9px;
    margin-left: 21px;
}
.taskbar .tray svg {
    stroke: #e8edf2;
}
.clock {
    width: 64px;
    align-self: center;
    font-size: 11px;
    line-height: 17px;
    text-align: center;
}
.notes {
    width: 36px;
    margin-right: 12px;
}
```
